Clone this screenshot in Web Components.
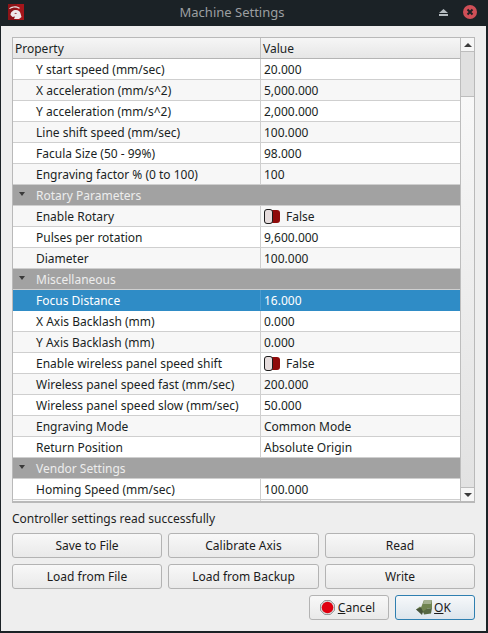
<!DOCTYPE html>
<html><head><meta charset="utf-8"><style>
html,body{margin:0;padding:0;background:#1b2226;}
body{font:12px "Noto Sans",sans-serif;color:#1a1f24;}
</style></head><body>
<settings-window title-text="Machine Settings">
  <prop-table>
    <prop-row name="Y start speed (mm/sec)" value="20.000"></prop-row>
    <prop-row alt name="X acceleration (mm/s^2)" value="5,000.000"></prop-row>
    <prop-row name="Y acceleration (mm/s^2)" value="2,000.000"></prop-row>
    <prop-row alt name="Line shift speed (mm/sec)" value="100.000"></prop-row>
    <prop-row name="Facula Size (50 - 99%)" value="98.000"></prop-row>
    <prop-row alt name="Engraving factor % (0 to 100)" value="100"></prop-row>
    <prop-group name="Rotary Parameters"></prop-group>
    <prop-row alt name="Enable Rotary" value="False" toggle></prop-row>
    <prop-row name="Pulses per rotation" value="9,600.000"></prop-row>
    <prop-row alt name="Diameter" value="100.000"></prop-row>
    <prop-group name="Miscellaneous"></prop-group>
    <prop-row selected name="Focus Distance" value="16.000"></prop-row>
    <prop-row name="X Axis Backlash (mm)" value="0.000"></prop-row>
    <prop-row alt name="Y Axis Backlash (mm)" value="0.000"></prop-row>
    <prop-row name="Enable wireless panel speed shift" value="False" toggle></prop-row>
    <prop-row alt name="Wireless panel speed fast (mm/sec)" value="200.000"></prop-row>
    <prop-row name="Wireless panel speed slow (mm/sec)" value="50.000"></prop-row>
    <prop-row alt name="Engraving Mode" value="Common Mode"></prop-row>
    <prop-row name="Return Position" value="Absolute Origin"></prop-row>
    <prop-group name="Vendor Settings"></prop-group>
    <prop-row name="Homing Speed (mm/sec)" value="100.000"></prop-row>
    <prop-row alt name="" value=""></prop-row>
  </prop-table>
  <status-line>Controller settings read successfully</status-line>
  <button-grid>
    <push-button>Save to File</push-button>
    <push-button>Calibrate Axis</push-button>
    <push-button>Read</push-button>
    <push-button>Load from File</push-button>
    <push-button>Load from Backup</push-button>
    <push-button>Write</push-button>
  </button-grid>
  <dialog-actions>
    <push-button icon="stop"><u>C</u>ancel</push-button>
    <push-button icon="ok" focused><u>O</u>K</push-button>
  </dialog-actions>
</settings-window>
<script>
function el(name, css, html){
  customElements.define(name, class extends HTMLElement{
    connectedCallback(){
      if(this.shadowRoot) return;
      const r=this.attachShadow({mode:'open'});
      const h = typeof html==='function'?html(this):html;
      r.innerHTML='<style>'+css+'</style>'+h;
    }
  });
}
el('settings-window',`
 :host{display:flex;flex-direction:column;width:488px;height:633px;box-sizing:border-box;background:#1b2226;}
 .bar{height:26px;display:flex;align-items:center;position:relative;flex:none;color:#9c9fa1;font-size:13px;}
 .bar .t{flex:1;text-align:center;margin-top:-2px;padding-right:24px;}
 .logo{position:absolute;left:8px;top:4px;width:16px;height:16px;}
 .eject{position:absolute;left:439px;top:9px;width:9px;height:7px;}
 .close{position:absolute;left:463px;top:5px;width:14px;height:14px;}
 .body{flex:1;background:#eeeeee;margin:0 2px 2px 1px;padding:11px 11px 0 11px;display:flex;flex-direction:column;min-height:0;}
`,h=>`<div class="bar">
  <svg class="logo" viewBox="0 0 16 16"><rect width="16" height="16" fill="#8c1418"/><path d="M9 0h7v16H8z" fill="#a5161b"/><path d="M1 4.500C4 1.500 9 1.500 12 4l-1 .8C8.500 3 5 3 2 5z" fill="#e8e4e4"/><path d="M2.500 11c0-3 2.500-5 5.500-5 2.500 0 4 1.500 4.500 3.500l1 3.500-2.500 2H6l1-2.500-2.500.5z" fill="#efeaea"/><path d="M6 9.500l2-.7.800 1.200z" fill="#8c1418"/></svg>
  <div class="t">${h.getAttribute('title-text')}</div>
  <svg class="eject" viewBox="0 0 9 7"><path d="M4.500 0L9 4H0z" fill="#b5bcc0"/><rect x="0" y="5" width="9" height="2" fill="#b5bcc0"/></svg>
  <svg class="close" viewBox="0 0 14 14"><circle cx="7" cy="7" r="7" fill="#cf4f57"/><path d="M4.500 4.500l5 5m0-5l-5 5" stroke="#1d2226" stroke-width="2"/></svg>
 </div><div class="body"><slot></slot></div>`);
el('prop-table',`
 :host{display:grid;grid-template-columns:1fr 14px;height:466px;flex:none;box-sizing:border-box;border:1px solid #b9b9b9;border-bottom-width:2px;background:#fff;overflow:hidden;}
 .main{display:flex;flex-direction:column;min-width:0;overflow:hidden;}
 .head{flex:none;display:grid;grid-template-columns:247px 1fr;height:20px;line-height:20px;background:linear-gradient(#f6f6f6,#e6e6e6);border-bottom:1px solid #b4b4b4;}
 .head div{padding-left:2px;padding-top:1px;line-height:19px;}
 .head div+div{border-left:1px solid #c0c0c0;padding-left:2px;}
 .rows{overflow:hidden;flex:1;}
 .sb{display:flex;flex-direction:column;background:#e2e2e2;border-left:1px solid #bdbdbd;}
 .btn{height:13px;flex:none;background:#f6f6f6;display:flex;align-items:center;justify-content:center;}
 .thumb{height:44px;flex:none;background:#e0e0e0;border-top:1px solid #bdbdbd;border-bottom:1px solid #bdbdbd;}
 .track{flex:1;background:linear-gradient(#f8f8f8,#e2e2e2);border-bottom:1px solid #bdbdbd;}
 .up,.dn{width:0;height:0;border-left:4px solid transparent;border-right:4px solid transparent;}
 .up{border-bottom:4px solid #3c3c3c;}
 .dn{border-top:4px solid #3c3c3c;}
`,`<div class="main"><div class="head"><div>Property</div><div>Value</div></div><div class="rows"><slot></slot></div></div>
 <div class="sb"><div class="btn"><div class="up"></div></div><div class="thumb"></div><div class="track"></div><div class="btn"><div class="dn"></div></div></div>`);
el('prop-row',`
 :host{display:grid;grid-template-columns:247px 1fr;height:21px;box-sizing:border-box;line-height:20px;background:#fff;border-bottom:1px solid #cfcfcf;white-space:nowrap;}
 :host([alt]){background:#f7f7f7;}
 :host([selected]){background:#2f8cc6;color:#fff;border-bottom-color:#2f8cc6;}
 .n{padding-left:23px;padding-top:1px;line-height:19px;}
 .v{border-left:1px solid #cfcfcf;padding-left:3px;display:flex;align-items:center;gap:5px;}
 .v span{padding-top:1px;line-height:19px;}
 :host([selected]) .v{border-left-color:#4a9bd0;}
 svg{width:17px;height:15px;flex:none;margin-top:1px;}
`,h=>`<div class="n">${h.getAttribute('name')}</div><div class="v">${h.hasAttribute('toggle')?'<svg viewBox="0 0 17 15"><rect x="4" y="1" width="12" height="13" rx="3" fill="#8f0a0a"/><rect x=".5" y=".5" width="8" height="14" rx="2.500" fill="#e6dcdc" stroke="#1c1c1c"/></svg>':''}<span>${h.getAttribute('value')}</span></div>`);
el('prop-group',`
 :host{display:flex;align-items:center;height:21px;box-sizing:border-box;background:#a2a2a2;color:#ededed;border-bottom:1px solid #cfcfcf;}
 .tri{width:0;height:0;border-left:3.500px solid transparent;border-right:3.500px solid transparent;border-top:4px solid #3a3a3a;margin:-2px 11px 0 6px;}
 .l{line-height:19px;padding-top:1px;}
`,h=>`<div class="tri"></div><div class="l">${h.getAttribute('name')}</div>`);
el('status-line',`:host{display:block;height:30px;box-sizing:border-box;padding-top:1px;line-height:30px;color:#1f1f1f;flex:none;}`,`<slot></slot>`);
el('button-grid',`:host{display:grid;grid-template-columns:150px 151px 150px;grid-auto-rows:25px;column-gap:6px;row-gap:6px;flex:none;}`,`<slot></slot>`);
el('dialog-actions',`:host{display:flex;justify-content:flex-end;gap:6px;margin-top:6px;flex:none;}
 ::slotted(push-button){width:80px;height:25px;}`,`<slot></slot>`);
const ICONS={
 stop:'<svg viewBox="0 0 16 16" width="15" height="15"><path d="M5 .5h6L15.500 5v6L11 15.500H5L.5 11V5z" fill="#d8d8d8" stroke="#8e8e8e"/><circle cx="8" cy="8" r="6.200" fill="#e0000f"/></svg>',
 ok:'<svg viewBox="0 0 17 17" width="17" height="17"><path d="M8 1h8v8l-5 .8v3.700H6L0 10.500 4 7.500l1 1z" fill="#6f8450"/><path d="M8 1h8l-1 4H7z" fill="#a3b090"/><path d="M0 10.500L6 16l1-3.500-2-4z" fill="#47543a"/><path d="M7 12.500l1 3 7-1 1-5.500-5 .8z" fill="#566842"/></svg>'
};
el('push-button',`
 :host{display:flex;box-sizing:border-box;align-items:center;justify-content:center;gap:3px;height:25px;border:1px solid #b3b3b3;border-radius:3px;background:linear-gradient(#f8f8f8,#e9e9e9);color:#1b1b1b;white-space:nowrap;}
 :host([icon]){padding-right:3px;}
 :host([focused]){border-color:#2f7fb0;background:linear-gradient(#f6f8fa,#dde5ec);gap:1px;}
 svg{flex:none;}
`,h=>`${ICONS[h.getAttribute('icon')]||''}<span><slot></slot></span>`);
</script>
</body></html>
